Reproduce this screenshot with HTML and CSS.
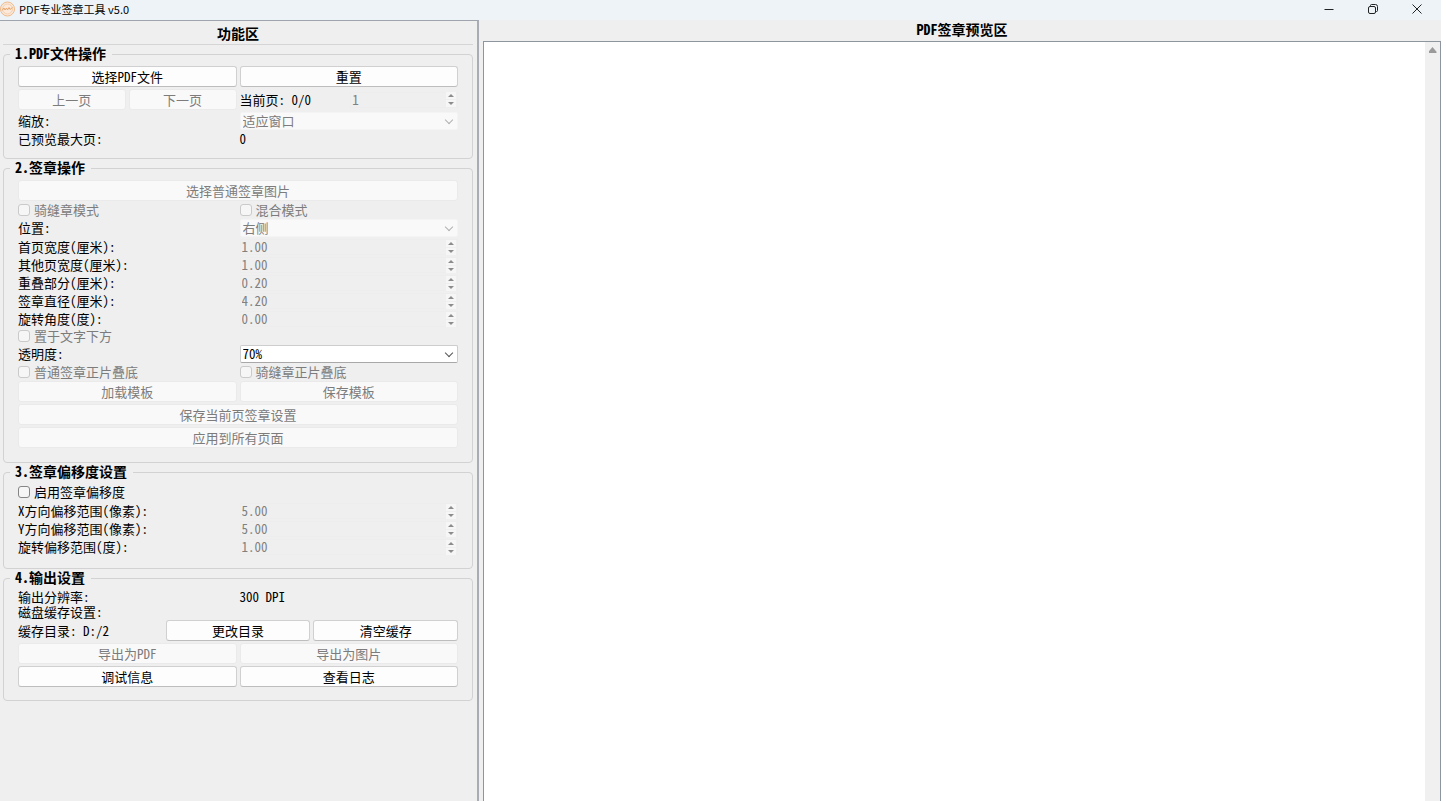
FILE: index.html
```html
<!DOCTYPE html>
<html lang="zh-CN">
<head>
    <meta charset="UTF-8">
    <meta name="viewport" content="width=device-width, initial-scale=1">
    <title>PDF专业签章工具 v5.0</title>
    <link rel="stylesheet" href="styles.css">
</head>
<body>
    <header class="titlebar">
        <svg class="app-icon" viewBox="0 0 16 16" width="16" height="16" aria-hidden="true">
            <circle cx="7.500" cy="8" r="7" fill="#fbeadb" stroke="#efb98a" stroke-width="1"/>
            <circle cx="7.500" cy="8" r="5" fill="none" stroke="#f5cfae" stroke-width="1"/>
            <path d="M2 9.500l2-2.500 1 2 1.500-2 1 2 1.500-2.500 1 2 2.500-2" fill="none" stroke="#e9a56c" stroke-width="1"/>
        </svg>
        <span class="app-title">PDF专业签章工具 v5.0</span>
        <div class="window-buttons">
            <button aria-label="最小化"><svg viewBox="0 0 12 12" width="12" height="12"><path d="M1.500 6.500h9"/></svg></button>
            <button aria-label="还原"><svg viewBox="0 0 12 12" width="12" height="12"><rect x="1.500" y="3.500" width="7" height="7" rx="1.500"/><path d="M3.500 3V2.500a1 1 0 0 1 1-1H8.500a2 2 0 0 1 2 2V7.500a1 1 0 0 1-1 1H9"/></svg></button>
            <button aria-label="关闭"><svg viewBox="0 0 12 12" width="12" height="12"><path d="M1.500 1.500l9 9M10.500 1.500l-9 9"/></svg></button>
        </div>
    </header>

    <main class="main">
        <section class="panel">
            <h1 class="panel-title">功能区</h1>

            <fieldset class="group file-group">
                <legend>1.PDF文件操作</legend>
                <div class="grid">
                    <button class="btn half">选择PDF文件</button>
                    <button class="btn half">重置</button>
                    <button class="btn" disabled>上一页</button>
                    <button class="btn" disabled>下一页</button>
                    <label for="page">当前页: 0/0</label>
                    <div class="spin"><input type="number" id="page" value="1" disabled><span class="arrows"><i class="up"></i><i class="down"></i></span></div>
                    <label class="half" for="zoom">缩放:</label>
                    <div class="combo half"><select id="zoom" disabled><option>适应窗口</option></select></div>
                    <span class="text half">已预览最大页:</span>
                    <span class="text half">0</span>
                </div>
            </fieldset>

            <fieldset class="group">
                <legend>2.签章操作</legend>
                <div class="grid">
                    <button class="btn full" disabled>选择普通签章图片</button>
                    <label class="check half disabled"><input type="checkbox" disabled>骑缝章模式</label>
                    <label class="check half disabled"><input type="checkbox" disabled>混合模式</label>
                    <label class="half" for="position">位置:</label>
                    <div class="combo half"><select id="position" disabled><option>右侧</option></select></div>
                    <label class="half" for="first-width">首页宽度(厘米):</label>
                    <div class="spin half"><input type="number" id="first-width" value="1.00" disabled><span class="arrows"><i class="up"></i><i class="down"></i></span></div>
                    <label class="half" for="other-width">其他页宽度(厘米):</label>
                    <div class="spin half"><input type="number" id="other-width" value="1.00" disabled><span class="arrows"><i class="up"></i><i class="down"></i></span></div>
                    <label class="half" for="overlap">重叠部分(厘米):</label>
                    <div class="spin half"><input type="number" id="overlap" value="0.20" disabled><span class="arrows"><i class="up"></i><i class="down"></i></span></div>
                    <label class="half" for="diameter">签章直径(厘米):</label>
                    <div class="spin half"><input type="number" id="diameter" value="4.20" disabled><span class="arrows"><i class="up"></i><i class="down"></i></span></div>
                    <label class="half" for="angle">旋转角度(度):</label>
                    <div class="spin half"><input type="number" id="angle" value="0.00" disabled><span class="arrows"><i class="up"></i><i class="down"></i></span></div>
                    <label class="check full disabled"><input type="checkbox" disabled>置于文字下方</label>
                    <label class="half" for="opacity">透明度:</label>
                    <div class="combo half"><select id="opacity"><option>70%</option></select></div>
                    <label class="check half disabled"><input type="checkbox" disabled>普通签章正片叠底</label>
                    <label class="check half disabled"><input type="checkbox" disabled>骑缝章正片叠底</label>
                    <button class="btn half" disabled>加载模板</button>
                    <button class="btn half" disabled>保存模板</button>
                    <button class="btn full" disabled>保存当前页签章设置</button>
                    <button class="btn full" disabled>应用到所有页面</button>
                </div>
            </fieldset>

            <fieldset class="group offset-group">
                <legend>3.签章偏移度设置</legend>
                <div class="grid">
                    <label class="check full"><input type="checkbox">启用签章偏移度</label>
                    <label class="half" for="offset-x">X方向偏移范围(像素):</label>
                    <div class="spin half"><input type="number" id="offset-x" value="5.00" disabled><span class="arrows"><i class="up"></i><i class="down"></i></span></div>
                    <label class="half" for="offset-y">Y方向偏移范围(像素):</label>
                    <div class="spin half"><input type="number" id="offset-y" value="5.00" disabled><span class="arrows"><i class="up"></i><i class="down"></i></span></div>
                    <label class="half" for="offset-angle">旋转偏移范围(度):</label>
                    <div class="spin half"><input type="number" id="offset-angle" value="1.00" disabled><span class="arrows"><i class="up"></i><i class="down"></i></span></div>
                </div>
            </fieldset>

            <fieldset class="group output-group">
                <legend>4.输出设置</legend>
                <div class="grid">
                    <span class="text half">输出分辨率:</span>
                    <span class="text half">300 DPI</span>
                    <span class="text full">磁盘缓存设置:</span>
                    <div class="cache-row full">
                        <span class="text">缓存目录: D:/2</span>
                        <button class="btn">更改目录</button>
                        <button class="btn">清空缓存</button>
                    </div>
                    <button class="btn half" disabled>导出为PDF</button>
                    <button class="btn half" disabled>导出为图片</button>
                    <button class="btn half">调试信息</button>
                    <button class="btn half">查看日志</button>
                </div>
            </fieldset>
        </section>

        <section class="preview">
            <h2 class="preview-title">PDF签章预览区</h2>
            <div class="canvas">
                <div class="page-area"></div>
                <div class="scrollbar"><i class="scroll-up"></i></div>
            </div>
        </section>
    </main>
</body>
</html>
```
FILE: styles.css
```css
* {
    box-sizing: border-box;
}

body {
    margin: 0;
    padding-right: 5px;
    height: 100vh;
    display: flex;
    flex-direction: column;
    overflow: hidden;
    background-color: #fff;
    color: #000;
    font-family: "Noto Sans CJK SC", sans-serif;
    font-size: 13px;
    line-height: 14px;
}

button, input, select {
    font: inherit;
    color: inherit;
}

/* Title bar */
.titlebar {
    flex: none;
    display: flex;
    align-items: center;
    height: 20px;
    padding-bottom: 3px;
    background-color: #eef3f8;
}

.app-icon {
    margin-right: 3px;
}

.app-title {
    font-size: 11px;
    line-height: 16px;
}

.window-buttons {
    display: flex;
    margin-left: auto;
    padding-right: 2px;
}

.window-buttons button {
    display: flex;
    align-items: center;
    justify-content: center;
    width: 44px;
    height: 16px;
    padding: 0;
    border: none;
    background: none;
}

.window-buttons svg {
    fill: none;
    stroke: #222;
    stroke-width: 1;
}

/* Main layout */
.main {
    flex: 1;
    min-height: 0;
    display: grid;
    grid-template-columns: 1fr 2fr;
    gap: 4px;
    background-color: #efefef;
    font-feature-settings: "hwid";
}

.panel {
    padding: 0 4px 0 3px;
    border-top: 1px solid #a0a5ad;
    border-right: 2px solid #a9acb4;
}

.panel-title, .preview-title {
    margin: 0;
    font-size: 14px;
    font-weight: bold;
    text-align: center;
}

.panel-title {
    height: 24px;
    line-height: 25px;
    border-bottom: 1px solid #d5d5d5;
}

/* Groups */
.group {
    min-width: 0;
    margin: 0;
    padding: 3px 14px 14px;
    border: 1px solid #d2d2d2;
    border-radius: 4px;
}

.file-group, .offset-group, .output-group {
    padding-bottom: 13px;
}

.offset-group {
    padding-top: 2px;
}

.group legend {
    height: 18px;
    margin-left: -8px;
    padding: 0 6px 0 5px;
    font-size: 14px;
    font-weight: bold;
    line-height: 16px;
}

.grid {
    display: grid;
    grid-template-columns: repeat(4, minmax(0, 1fr));
    gap: 2px 3px;
    align-items: center;
}

.half {
    grid-column: span 2;
}

.full {
    grid-column: 1 / -1;
}

.text {
    line-height: 13px;
}

.btn {
    height: 21px;
    padding: 0;
    border: 1px solid #d0d0d0;
    border-bottom-color: #bdbdbd;
    border-radius: 3px;
    background-color: #fdfdfd;
    line-height: 19px;
    text-align: center;
    white-space: nowrap;
}

.btn:disabled {
    border-color: #eaeaea;
    background-color: #f9f9f9;
    color: #7c7c7c;
}

.cache-row {
    display: grid;
    grid-template-columns: repeat(3, 1fr);
    gap: 3px;
    align-items: center;
}

/* Spin boxes */
.spin {
    display: flex;
    align-items: center;
    height: 16px;
    padding-right: 1px;
    border: 1px solid #ededed;
    color: #808080;
}

.spin input {
    flex: 1;
    min-width: 0;
    height: 14px;
    padding: 0 0 0 1px;
    border: none;
    background: none;
    appearance: textfield;
}

.spin input::-webkit-inner-spin-button {
    display: none;
}

.arrows {
    display: flex;
    flex-direction: column;
    gap: 1px;
}

.arrows i {
    display: flex;
    align-items: center;
    justify-content: center;
    width: 10px;
    height: 7px;
    background-color: #f6f6f6;
}

.arrows i::before {
    content: "";
    border: 3px solid transparent;
    border-top-width: 0;
    border-bottom-color: #8c8c8c;
}

.arrows .down::before {
    border-top: 3px solid #8c8c8c;
    border-bottom-width: 0;
}

/* Drop-downs */
.combo {
    position: relative;
    height: 18px;
}

.combo select {
    display: block;
    width: 100%;
    height: 18px;
    padding: 0 2px;
    border: 1px solid #cdcdcd;
    border-bottom-color: #a8a8a8;
    border-radius: 2px;
    background-color: #fff;
    line-height: 16px;
    appearance: none;
}

.combo select:disabled {
    border-color: #f4f4f4;
    background-color: #f9f9f9;
    color: #7c7c7c;
    opacity: 1;
}

.combo::after {
    content: "";
    position: absolute;
    top: 5px;
    right: 6px;
    width: 5px;
    height: 5px;
    border: solid #555;
    border-width: 0 1px 1px 0;
    transform: rotate(45deg);
    pointer-events: none;
}

.combo:has(select:disabled)::after {
    border-color: #b0b0b0;
}

/* Check boxes */
.check {
    display: flex;
    align-items: center;
    gap: 4px;
    height: 14px;
}

.offset-group .check {
    height: 18px;
}

.check.disabled {
    color: #7c7c7c;
}

.check input {
    width: 12px;
    height: 12px;
    margin: 0;
    border: 1px solid #858585;
    border-radius: 3px;
    background-color: #f6f6f6;
    appearance: none;
}

.check input:disabled {
    border-color: #cacaca;
}

.check input:checked {
    background-color: #0067c0;
}

/* Preview */
.preview {
    display: flex;
    flex-direction: column;
    min-width: 0;
}

.preview-title {
    height: 21px;
    line-height: 18px;
}

.canvas {
    flex: 1;
    display: flex;
    border: 1px solid #8f959e;
    border-bottom: none;
    background-color: #fff;
}

.page-area {
    flex: 1;
}

.scrollbar {
    display: flex;
    justify-content: center;
    width: 15px;
    padding-top: 5px;
    background-color: #f0f0f0;
}

.scroll-up {
    width: 8px;
    height: 6px;
    background-color: #9a9a9a;
    clip-path: polygon(50% 0, 100% 80%, 100% 100%, 0 100%, 0 80%);
}
```
